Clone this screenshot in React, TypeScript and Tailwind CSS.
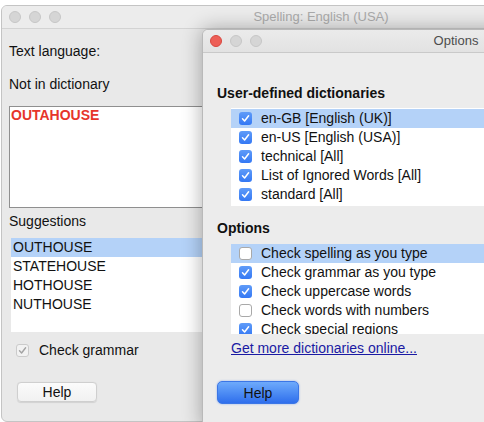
import React from "react";

const font = "font-['Liberation_Sans',Arial,sans-serif]";

function Light({ color }: { color: "red" | "gray" }) {
    return (
        <span
            className={
                color === "red"
                    ? "h-[12px] w-[12px] rounded-full border border-[#d8473e] bg-[#ed5f57]"
                    : "h-[12px] w-[12px] rounded-full border border-[#c6c6c6] bg-[#d5d5d5]"
            }
        />
    );
}

function Check({ on, disabled }: { on: boolean; disabled?: boolean }) {
    if (disabled) {
        return (
            <span className="flex h-[13px] w-[13px] items-center justify-center rounded-[3px] border border-[#cbcbcb] bg-[#f2f2f2]">
                <svg width="9" height="9" viewBox="0 0 9 9">
                    <path d="M1.5 4.8 L3.6 7 L7.6 1.8" fill="none" stroke="#a3a3a3" strokeWidth="1.4" strokeLinecap="round" strokeLinejoin="round" />
                </svg>
            </span>
        );
    }
    if (!on) {
        return <span className="h-[13px] w-[13px] rounded-[3px] border border-[#a9a9a9] bg-white" />;
    }
    return (
        <span className="flex h-[13px] w-[13px] items-center justify-center rounded-[3px] bg-linear-to-b from-[#5f9bf8] to-[#3478f4]">
            <svg width="9" height="9" viewBox="0 0 9 9">
                <path d="M1.5 4.8 L3.6 7 L7.6 1.8" fill="none" stroke="#ffffff" strokeWidth="1.5" strokeLinecap="round" strokeLinejoin="round" />
            </svg>
        </span>
    );
}

function OptRow({ label, on, selected }: { label: string; on: boolean; selected?: boolean }) {
    return (
        <div className={`flex h-[19px] items-center gap-[9px] pl-[8px] ${selected ? "bg-[#b4d2f8]" : ""}`}>
            <Check on={on} />
            <span className="text-[14px] leading-[17px] text-[#111]">{label}</span>
        </div>
    );
}

export default function App() {
    const suggestions = ["OUTHOUSE", "STATEHOUSE", "HOTHOUSE", "NUTHOUSE"];
    const dictionaries = [
        { label: "en-GB [English (UK)]", on: true, selected: true },
        { label: "en-US [English (USA)]", on: true },
        { label: "technical [All]", on: true },
        { label: "List of Ignored Words [All]", on: true },
        { label: "standard [All]", on: true },
    ];
    const options = [
        { label: "Check spelling as you type", on: false, selected: true },
        { label: "Check grammar as you type", on: true },
        { label: "Check uppercase words", on: true },
        { label: "Check words with numbers", on: false },
        { label: "Check special regions", on: true },
    ];

    return (
        <div className={`relative h-[422px] w-[484px] overflow-hidden bg-white ${font}`}>
            {/* text of the document behind, cut by the window */}
            <span className="absolute left-[-1px] top-[-12px] font-['Liberation_Serif',serif] text-[14px] leading-[16px] text-black">
                OUSE
            </span>

            {/* Spelling window */}
            <div className="absolute left-[1px] top-[5px] h-[417px] w-[640px] overflow-hidden rounded-[6px] border border-[#c4c4c4] bg-[#e9e9e9]">
                <div className="relative flex h-[23px] items-center gap-[8px] border-b border-[#d3d3d3] bg-[#ececec] pl-[7px]">
                    <Light color="gray" />
                    <Light color="gray" />
                    <Light color="gray" />
                    <span className="absolute inset-x-0 text-center text-[13px] leading-[22px] text-[#ababab]">
                        Spelling: English (USA)
                    </span>
                </div>
                <div className="flex flex-col pl-[7px] text-[14px] leading-[17px] text-[#111]">
                    <p className="mt-[14px]">Text language:</p>
                    <p className="mt-[16px]">Not in dictionary</p>
                    <div className="mt-[13px] h-[102px] w-[400px] border border-[#8f8f8f] bg-white pl-[1px]">
                        <span className="font-bold text-[#e6352b]">OUTAHOUSE</span>
                    </div>
                    <p className="mt-[5px]">Suggestions</p>
                    <div className="ml-[2px] mt-[8px] h-[94px] w-[400px] bg-white">
                        {suggestions.map((s, i) => (
                            <div
                                key={s}
                                className={`h-[19px] pl-[2px] leading-[19px] ${i === 0 ? "bg-[#b4d2f8]" : ""}`}>
                                {s}
                            </div>
                        ))}
                    </div>
                    <div className="ml-[7px] mt-[9px] flex h-[19px] items-center gap-[10px]">
                        <Check on disabled />
                        <span>Check grammar</span>
                    </div>
                    <button className="ml-[8px] mt-[22px] h-[20px] w-[80px] rounded-[4px] border border-[#cfcfcf] bg-linear-to-b from-[#fbfbfb] to-[#f1f1f1] text-[14px] leading-[18px] text-[#111] shadow-[0_0.5px_1px_rgba(0,0,0,0.1)]">
                        Help
                    </button>
                </div>
            </div>

            {/* Options window */}
            <div className="absolute left-[202px] top-[29px] h-[400px] w-[508px] overflow-hidden rounded-[6px] border border-[#b9b9b9] bg-[#ececec] shadow-[0_0_20px_rgba(0,0,0,0.32)]">
                <div className="relative flex h-[23px] items-center gap-[8px] border-b border-[#c9c9c9] bg-linear-to-b from-[#ebebeb] to-[#e2e2e2] pl-[7px]">
                    <Light color="red" />
                    <Light color="gray" />
                    <Light color="gray" />
                    <span className="absolute inset-x-0 text-center text-[13px] leading-[22px] text-[#4d4d4d]">
                        Options
                    </span>
                </div>
                <div className="flex flex-col pl-[14px] text-[14px] leading-[17px] text-[#111]">
                    <p className="mt-[32px] font-bold">User-defined dictionaries</p>
                    <div className="ml-[14px] mt-[6px] h-[98px] bg-white pt-[1px]">
                        {dictionaries.map((d) => (
                            <OptRow key={d.label} {...d} />
                        ))}
                    </div>
                    <p className="mt-[14px] font-bold">Options</p>
                    <div className="ml-[14px] mt-[7px] h-[90px] overflow-hidden bg-white">
                        {options.map((o) => (
                            <OptRow key={o.label} {...o} />
                        ))}
                    </div>
                    <a href="#" className="ml-[14px] mt-[6px] self-start text-[#1a1aa3] underline">
                        Get more dictionaries online...
                    </a>
                    <button className="mt-[24px] h-[23px] w-[82px] rounded-[5px] border border-[#3b76e6] bg-linear-to-b from-[#6eaafb] to-[#2f6eec] text-[14px] leading-[20px] text-[#111] shadow-[0_0_2px_rgba(60,120,240,0.6)]">
                        Help
                    </button>
                </div>
            </div>
        </div>
    );
}
